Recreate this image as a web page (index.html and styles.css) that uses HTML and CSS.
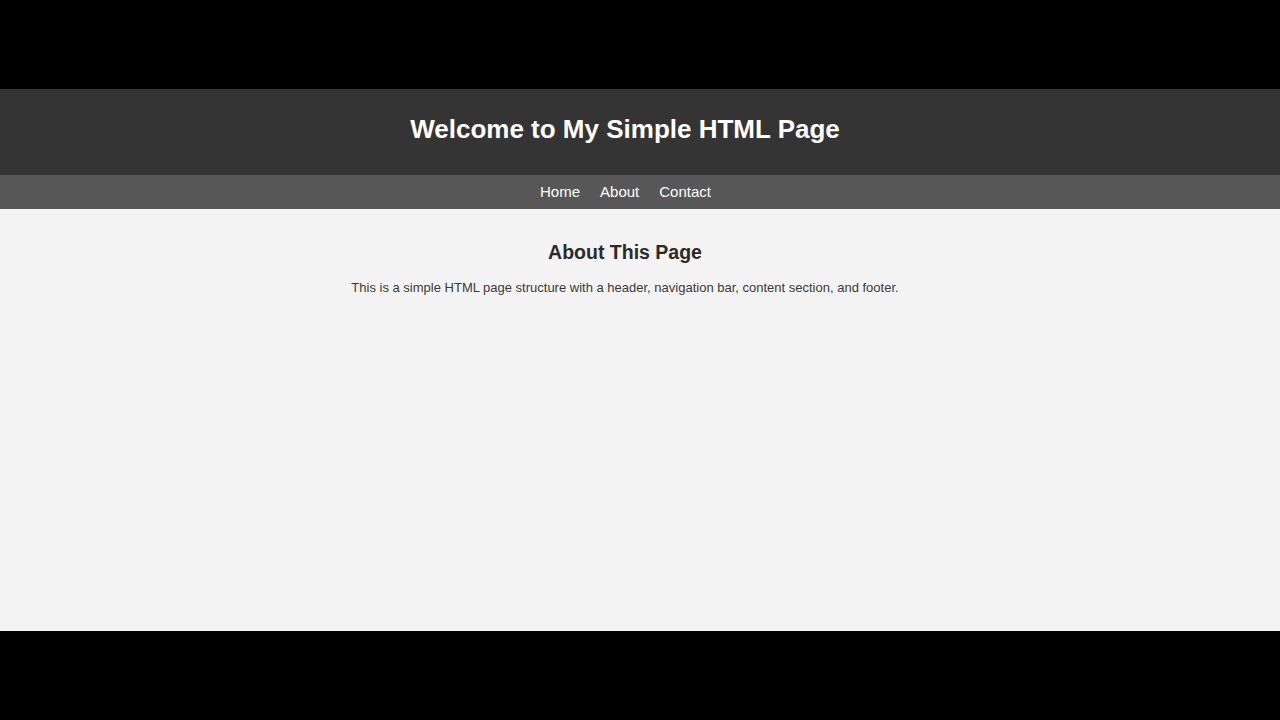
FILE: index.html
```html
<!DOCTYPE html>
<html>
<head>
<meta charset="utf-8">
<title>Simple HTML Page</title>
<link rel="stylesheet" href="styles.css">
</head>
<body>
<div class="frame">
  <div class="bar"></div>
  <div class="page">
    <header class="site-header">
      <h1>Welcome to My Simple HTML Page</h1>
    </header>
    <nav class="site-nav">
      <a href="#">Home</a>
      <a href="#">About</a>
      <a href="#">Contact</a>
    </nav>
    <main class="content">
      <h2>About This Page</h2>
      <p>This is a simple HTML page structure with a header, navigation bar, content section, and footer.</p>
    </main>
  </div>
  <div class="bar"></div>
</div>
</body>
</html>
```
FILE: styles.css
```css
html, body {
  margin: 0;
  padding: 0;
  background: #000;
}
body {
  font-family: "Liberation Sans", Arial, sans-serif;
}
.frame {
  display: flex;
  flex-direction: column;
  height: 720px;
}
.bar {
  height: 89px;
  background: #000;
  flex: none;
}
.page {
  flex: 1;
  display: flex;
  flex-direction: column;
  background: #f3f3f3;
}
.site-header {
  background: #343434;
  height: 86px;
  box-sizing: border-box;
  padding: 0 30px 6px 0;
  display: flex;
  align-items: center;
  justify-content: center;
}
.site-header h1 {
  margin: 0;
  color: #fff;
  font-size: 26px;
  font-weight: bold;
}
.site-nav {
  background: #575757;
  height: 34px;
  box-sizing: border-box;
  padding: 0 29px 2px 0;
  display: flex;
  align-items: center;
  justify-content: center;
  gap: 20px;
}
.site-nav a {
  color: #fff;
  text-decoration: none;
  font-size: 15px;
}
.content {
  text-align: center;
  padding: 32px 30px 0 0;
}
.content h2 {
  margin: 0 0 16px;
  font-size: 19.5px;
  color: #2a2a2a;
}
.content p {
  margin: 0;
  font-size: 13px;
  color: #3a3a3a;
}
```
